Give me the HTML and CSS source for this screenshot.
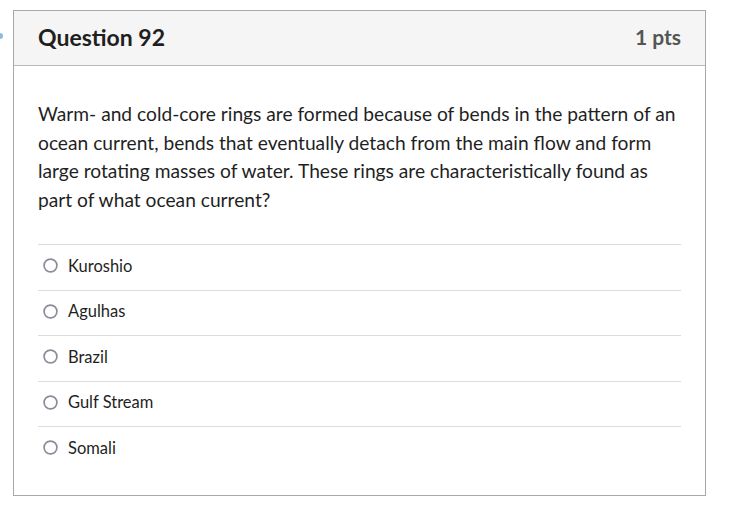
FILE: index.html
```html
<!DOCTYPE html>
<html>
<head>
<meta charset="utf-8">
<link rel="stylesheet" href="styles.css">
</head>
<body>
<div class="marker"></div>
<div class="question">
  <div class="header">
    <span class="title">Question 92</span>
    <span class="pts">1 pts</span>
  </div>
  <div class="content">
    <p class="text">Warm- and cold-core rings are formed because of bends in the pattern of an ocean current, bends that eventually detach from the main flow and form large rotating masses of water. These rings are characteristically found as part of what ocean current?</p>
    <div class="answers">
      <div class="answer"><svg class="radio" viewBox="0 0 15 15"><circle cx="7.5" cy="7.5" r="6.4"/></svg><span>Kuroshio</span></div>
      <div class="answer"><svg class="radio" viewBox="0 0 15 15"><circle cx="7.5" cy="7.5" r="6.4"/></svg><span>Agulhas</span></div>
      <div class="answer"><svg class="radio" viewBox="0 0 15 15"><circle cx="7.5" cy="7.5" r="6.4"/></svg><span>Brazil</span></div>
      <div class="answer"><svg class="radio" viewBox="0 0 15 15"><circle cx="7.5" cy="7.5" r="6.4"/></svg><span>Gulf Stream</span></div>
      <div class="answer"><svg class="radio" viewBox="0 0 15 15"><circle cx="7.5" cy="7.5" r="6.4"/></svg><span>Somali</span></div>
    </div>
  </div>
</div>
</body>
</html>
```
FILE: styles.css
```css
html, body {
  margin: 0;
  padding: 0;
  background: #fff;
}
body {
  font-family: Lato, "Liberation Sans", sans-serif;
  color: #2d3b45;
  padding: 10px 0 0 13px;
  position: relative;
}
.marker {
  position: absolute;
  left: -3px;
  top: 33px;
  width: 6px;
  height: 6px;
  border-radius: 50%;
  background: #8fbbe0;
}
.question {
  width: 691px;
  border: 1px solid #a8a8a8;
}
.header {
  background: #f5f5f5;
  border-bottom: 1px solid #b8b8b8;
  height: 54px;
  display: flex;
  align-items: center;
  justify-content: space-between;
  padding: 0 24px;
}
.title {
  font-size: 23px;
  font-weight: bold;
  color: #1f1f1f;
  margin-top: -3px;
}
.pts {
  font-size: 21px;
  font-weight: bold;
  color: #555;
  margin-top: -3px;
}
.content {
  padding: 34px 24px 23px;
}
.text {
  margin: 0 0 30px;
  font-size: 19.2px;
  line-height: 28.5px;
  color: #1f1f1f;
}
.answer {
  box-sizing: border-box;
  border-top: 1px solid #dcdcdc;
  height: 45.5px;
  display: flex;
  align-items: center;
  font-size: 16.5px;
  color: #1f1f1f;
  padding-left: 5px;
  padding-bottom: 3px;
}
.radio {
  width: 15px;
  height: 15px;
  margin-right: 10px;
  flex: none;
  fill: none;
  stroke: #8b8d9a;
  stroke-width: 1.7;
}
```
